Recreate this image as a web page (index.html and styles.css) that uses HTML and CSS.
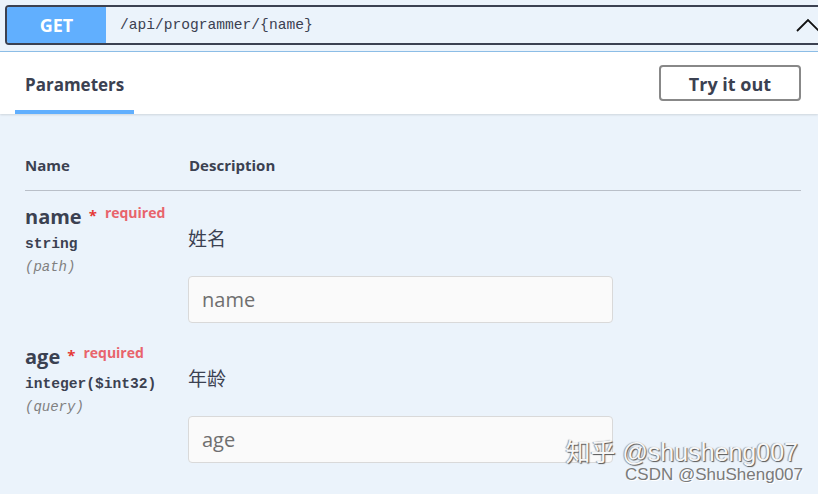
FILE: index.html
```html
<!DOCTYPE html>
<html lang="zh">
<head>
<meta charset="utf-8">
<title>Swagger operation</title>
<link rel="stylesheet" href="styles.css">
</head>
<body>
<div class="page">
  <div class="opblock">
    <div class="summary">
      <span class="method">GET</span>
      <span class="path">/api/programmer/{name}</span>
      <svg class="chevron" width="26" height="14" viewBox="0 0 26 14"><polyline points="1,13 12,2 23,13" fill="none" stroke="#111" stroke-width="1.8"/></svg>
    </div>
  </div>
  <div class="divider"></div>
  <div class="section-header">
    <div class="tab">Parameters</div>
    <button class="try-out">Try it out</button>
  </div>
  <div class="params">
    <div class="table-head">
      <div class="col-name">Name</div>
      <div class="col-desc">Description</div>
    </div>
    <div class="param-row">
      <div class="param-info">
        <div class="param-name">name<span class="star">*</span><span class="req">required</span></div>
        <div class="param-type">string</div>
        <div class="param-in">(path)</div>
      </div>
      <div class="param-desc">
        <p class="desc-text">姓名</p>
        <input class="param-input" type="text" placeholder="name">
      </div>
    </div>
    <div class="param-row">
      <div class="param-info">
        <div class="param-name">age<span class="star">*</span><span class="req">required</span></div>
        <div class="param-type">integer($int32)</div>
        <div class="param-in">(query)</div>
      </div>
      <div class="param-desc">
        <p class="desc-text">年龄</p>
        <input class="param-input" type="text" placeholder="age">
      </div>
    </div>
  </div>
  <div class="watermark">
    <div class="wm-zhihu">知乎 @shusheng007</div>
    <div class="wm-csdn">CSDN @ShuSheng007</div>
  </div>
</div>
</body>
</html>
```
FILE: styles.css
```css
html, body {
  margin: 0;
  padding: 0;
  background: #ebf3fb;
  overflow: hidden;
}
.page {
  position: relative;
  width: 818px;
  height: 494px;
  font-family: "Open Sans", "Noto Sans CJK SC", sans-serif;
  color: #3b4151;
}
.opblock {
  padding: 5px 0 0 5px;
}
.summary {
  display: flex;
  align-items: center;
  height: 36px;
  border: 2px solid #3b4151;
  border-radius: 4px;
  margin-right: -12px;
  background: #ebf3fb;
  overflow: hidden;
}
.method {
  width: 99px;
  height: 36px;
  background: #61affe;
  color: #fff;
  font-weight: 700;
  font-size: 18px;
  display: flex;
  align-items: center;
  justify-content: center;
}
.path {
  margin-left: 14px;
  font-family: "Liberation Mono", monospace;
  font-size: 14.6px;
  color: #3b4151;
  flex: 1;
}
.chevron {
  margin-right: 6px;
}
.divider {
  height: 1px;
  background: #8ebfe8;
  margin-top: 6px;
}
.section-header {
  height: 62px;
  background: #fff;
  display: flex;
  justify-content: space-between;
  align-items: flex-start;
  padding: 0 17px 0 15px;
  box-shadow: 0 1px 2px rgba(0,0,0,0.12);
  position: relative;
}
.tab {
  width: 119px;
  height: 62px;
  box-sizing: border-box;
  border-bottom: 4px solid #61affe;
  font-weight: 700;
  font-size: 17px;
  padding-left: 10px;
  padding-top: 2px;
  line-height: 62px;
}
.try-out {
  margin-top: 13px;
  width: 142px;
  height: 36px;
  border: 2px solid #888;
  border-radius: 4px;
  background: #fff;
  font-family: "Open Sans", sans-serif;
  font-weight: 700;
  font-size: 18px;
  color: #3b4151;
  padding: 2px 0 0;
}
.params {
  padding: 40px 17px 0 25px;
}
.table-head {
  display: grid;
  grid-template-columns: 164px 1fr;
  font-weight: 700;
  font-size: 15px;
  padding-bottom: 14px;
  border-bottom: 1px solid #b9bfc8;
  line-height: 22px;
}
.param-row {
  display: grid;
  grid-template-columns: 163px 1fr;
  padding: 12px 0 8px;
}
.param-name {
  font-weight: 700;
  font-size: 20px;
  line-height: 28px;
}
.star {
  color: #e53935;
  font-size: 15px;
  position: relative;
  top: -3px;
  margin-left: 7px;
}
.req {
  color: #e8646c;
  font-size: 14px;
  position: relative;
  top: -6px;
  margin-left: 8px;
}
.param-type {
  font-family: "Liberation Mono", monospace;
  font-size: 14.6px;
  font-weight: 700;
  color: #3b4151;
  line-height: 20px;
  margin-top: 1px;
}
.param-in {
  font-family: "Liberation Mono", monospace;
  font-size: 14px;
  font-style: italic;
  color: #808080;
  line-height: 20px;
  margin-top: 3px;
}
.desc-text {
  margin: 23px 0 0;
  font-size: 19px;
  line-height: 26px;
  color: #3b4151;
}
.param-input {
  display: block;
  margin-top: 24px;
  width: 425px;
  height: 47px;
  box-sizing: border-box;
  border: 1px solid #d9d9d9;
  border-radius: 4px;
  background: #fafafa;
  padding: 0 13px;
  font-family: "Open Sans", sans-serif;
  font-size: 20px;
  color: #3b4151;
}
.param-input::placeholder {
  color: #6f6f6f;
}
.watermark {
  position: absolute;
  right: 15px;
  bottom: 10px;
  text-align: right;
}
.wm-zhihu {
  font-family: "Liberation Sans", "Noto Sans CJK SC", sans-serif;
  font-size: 25px;
  line-height: 28px;
  color: #f7f7f7;
  text-shadow: 1px 1px 1px #555, -1px 0 1px #999;
  margin-right: 5px;
}
.wm-csdn {
  font-family: "Liberation Sans", sans-serif;
  font-size: 17px;
  line-height: 18px;
  color: #7a7a7a;
  text-shadow: 1px 1px 0 #fff;
}
```
